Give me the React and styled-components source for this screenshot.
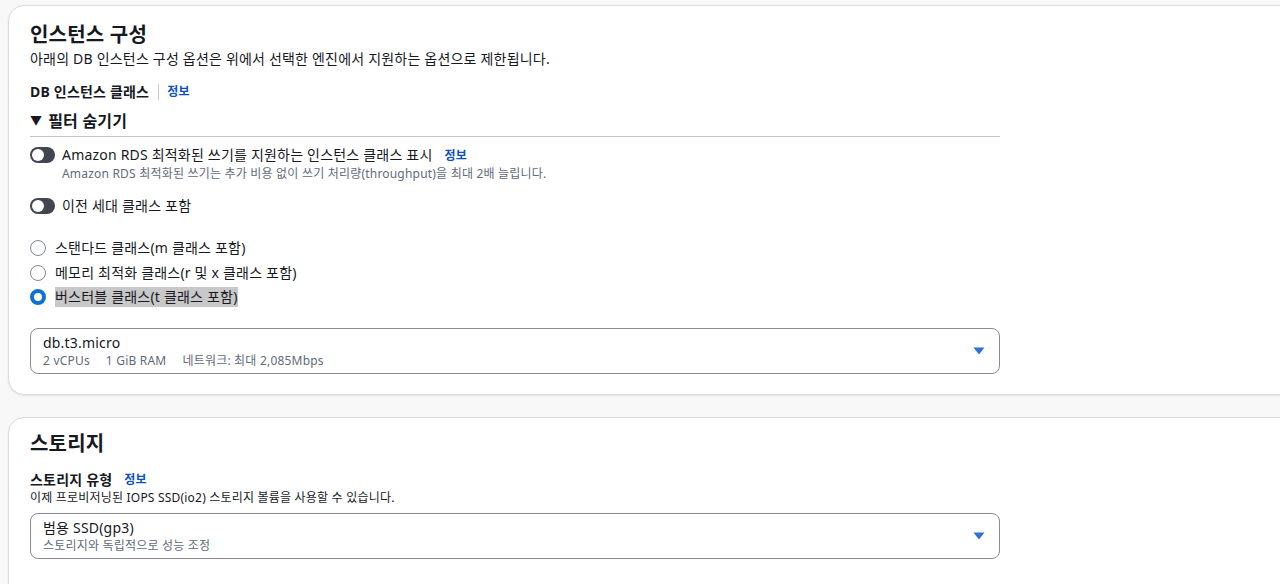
import React from 'react';
import styled, { createGlobalStyle } from 'styled-components';

const Global = createGlobalStyle`
  html, body {
    margin: 0;
    background: #f8f8f8;
    overflow: hidden;
  }
  body {
    padding: 5px 0 0 8px;
    font-family: "Noto Sans", "Noto Sans CJK KR", sans-serif;
    color: #16191f;
    letter-spacing: 0.2px;
  }
`;

const Card = styled.section`
  width: 1300px;
  box-sizing: border-box;
  background: #fff;
  border: 1px solid #dcdcde;
  border-radius: 16px;
  padding: ${p => p.$pt || 16}px 0 20px 21px;
  margin-bottom: 22px;
  box-shadow: 0 1px 2px rgba(0, 7, 22, 0.08);
`;

const Inner = styled.div`
  width: 970px;
`;

const Title = styled.h2`
  margin: 0;
  font-size: 20px;
  line-height: 26px;
  font-weight: 700;
`;

const Sub = styled.p`
  margin: ${p => p.$mt || 0}px 0 0;
  font-size: 14px;
  line-height: 20px;
  color: #16191f;
`;

const Label = styled.div`
  margin-top: ${p => p.$mt || 0}px;
  display: flex;
  align-items: center;
  font-size: 14px;
  line-height: 20px;
  font-weight: 700;
`;

const Sep = styled.span`
  display: inline-block;
  width: 1px;
  height: 16px;
  background: #c6c6cd;
  margin: 0 8px 0 9px;
`;

const Info = styled.a`
  font-size: 12px;
  font-weight: 700;
  color: #0b4fc4;
  margin-left: ${p => p.$ml || 0}px;
  text-decoration: none;
`;

const Filter = styled.div`
  margin-top: 8px;
  font-size: 16px;
  line-height: 22px;
  font-weight: 700;
  padding-bottom: 4px;
  border-bottom: 1px solid #c6c6cd;
  display: flex;
  align-items: center;
  gap: 6px;
`;

const Arrow = styled.span`
  font-size: 12px;
`;

const ToggleRow = styled.div`
  margin-top: ${p => p.$mt}px;
  display: flex;
  align-items: flex-start;
  gap: 7px;
`;

const Toggle = styled.span`
  flex: none;
  margin-top: 2px;
  width: 25px;
  height: 16px;
  border-radius: 8px;
  background: #424650;
  position: relative;
  &::after {
    content: '';
    position: absolute;
    left: 2px;
    top: 2px;
    width: 12px;
    height: 12px;
    border-radius: 50%;
    background: #fff;
  }
`;

const ToggleText = styled.div`
  font-size: 14px;
  line-height: 20px;
`;

const Desc = styled.div`
  font-size: 12px;
  line-height: 16px;
  color: ${p => p.$c || '#5f6b7a'};
`;

const Radios = styled.div`
  margin-top: 22px;
  display: flex;
  flex-direction: column;
  gap: 4.5px;
`;

const RadioRow = styled.label`
  display: flex;
  align-items: center;
  gap: 9px;
  font-size: 14px;
  line-height: 20px;
`;

const Circle = styled.span`
  flex: none;
  box-sizing: border-box;
  width: 16px;
  height: 16px;
  border-radius: 50%;
  background: #fff;
  border: ${p => (p.$on ? '4.5px solid #0972d3' : '1.5px solid #7d8998')};
`;

const RadioText = styled.span`
  background: ${p => (p.$sel ? '#c8c8c8' : 'transparent')};
`;

const Select = styled.div`
  margin-top: ${p => p.$mt}px;
  box-sizing: border-box;
  border: 1px solid #8c8c94;
  border-radius: 8px;
  padding: 4px 14px 4px 12px;
  display: flex;
  align-items: center;
  justify-content: space-between;
`;

const SelectMain = styled.div`
  font-size: 14px;
  line-height: 20px;
`;

const Specs = styled.div`
  display: flex;
  gap: 16px;
  font-size: 12px;
  line-height: 16px;
  color: #5f6b7a;
`;

const Caret = () => (
  <svg width="12" height="8" viewBox="0 0 12 8">
    <path d="M0.5 0.5 H11.5 L6 7.5 Z" fill="#2f6fdc" />
  </svg>
);

export default function App() {
  return (
    <>
      <Global />
      <Card>
        <Inner>
          <Title>인스턴스 구성</Title>
          <Sub $mt={1}>아래의 DB 인스턴스 구성 옵션은 위에서 선택한 엔진에서 지원하는 옵션으로 제한됩니다.</Sub>
          <Label $mt={13}>
            DB 인스턴스 클래스<Sep />
            <Info>정보</Info>
          </Label>
          <Filter>
            <Arrow>▼</Arrow>필터 숨기기
          </Filter>
          <ToggleRow $mt={8}>
            <Toggle />
            <div>
              <ToggleText>
                Amazon RDS 최적화된 쓰기를 지원하는 인스턴스 클래스 표시
                <Info $ml={12}>정보</Info>
              </ToggleText>
              <Desc>Amazon RDS 최적화된 쓰기는 추가 비용 없이 쓰기 처리량(throughput)을 최대 2배 늘립니다.</Desc>
            </div>
          </ToggleRow>
          <ToggleRow $mt={14}>
            <Toggle />
            <ToggleText>이전 세대 클래스 포함</ToggleText>
          </ToggleRow>
          <Radios>
            <RadioRow>
              <Circle />
              <RadioText>스탠다드 클래스(m 클래스 포함)</RadioText>
            </RadioRow>
            <RadioRow>
              <Circle />
              <RadioText>메모리 최적화 클래스(r 및 x 클래스 포함)</RadioText>
            </RadioRow>
            <RadioRow>
              <Circle $on />
              <RadioText $sel>버스터블 클래스(t 클래스 포함)</RadioText>
            </RadioRow>
          </Radios>
          <Select $mt={21}>
            <div>
              <SelectMain>db.t3.micro</SelectMain>
              <Specs>
                <span>2 vCPUs</span>
                <span>1 GiB RAM</span>
                <span>네트워크: 최대 2,085Mbps</span>
              </Specs>
            </div>
            <Caret />
          </Select>
        </Inner>
      </Card>
      <Card $pt={13}>
        <Inner>
          <Title>스토리지</Title>
          <Label $mt={13}>
            스토리지 유형<Info $ml={12}>정보</Info>
          </Label>
          <Desc $c="#16191f">이제 프로비저닝된 IOPS SSD(io2) 스토리지 볼륨을 사용할 수 있습니다.</Desc>
          <Select $mt={7}>
            <div>
              <SelectMain>범용 SSD(gp3)</SelectMain>
              <Specs>
                <span>스토리지와 독립적으로 성능 조정</span>
              </Specs>
            </div>
            <Caret />
          </Select>
          <Label $mt={23}>
            할당된 스토리지<Info $ml={12}>정보</Info>
          </Label>
        </Inner>
      </Card>
    </>
  );
}
